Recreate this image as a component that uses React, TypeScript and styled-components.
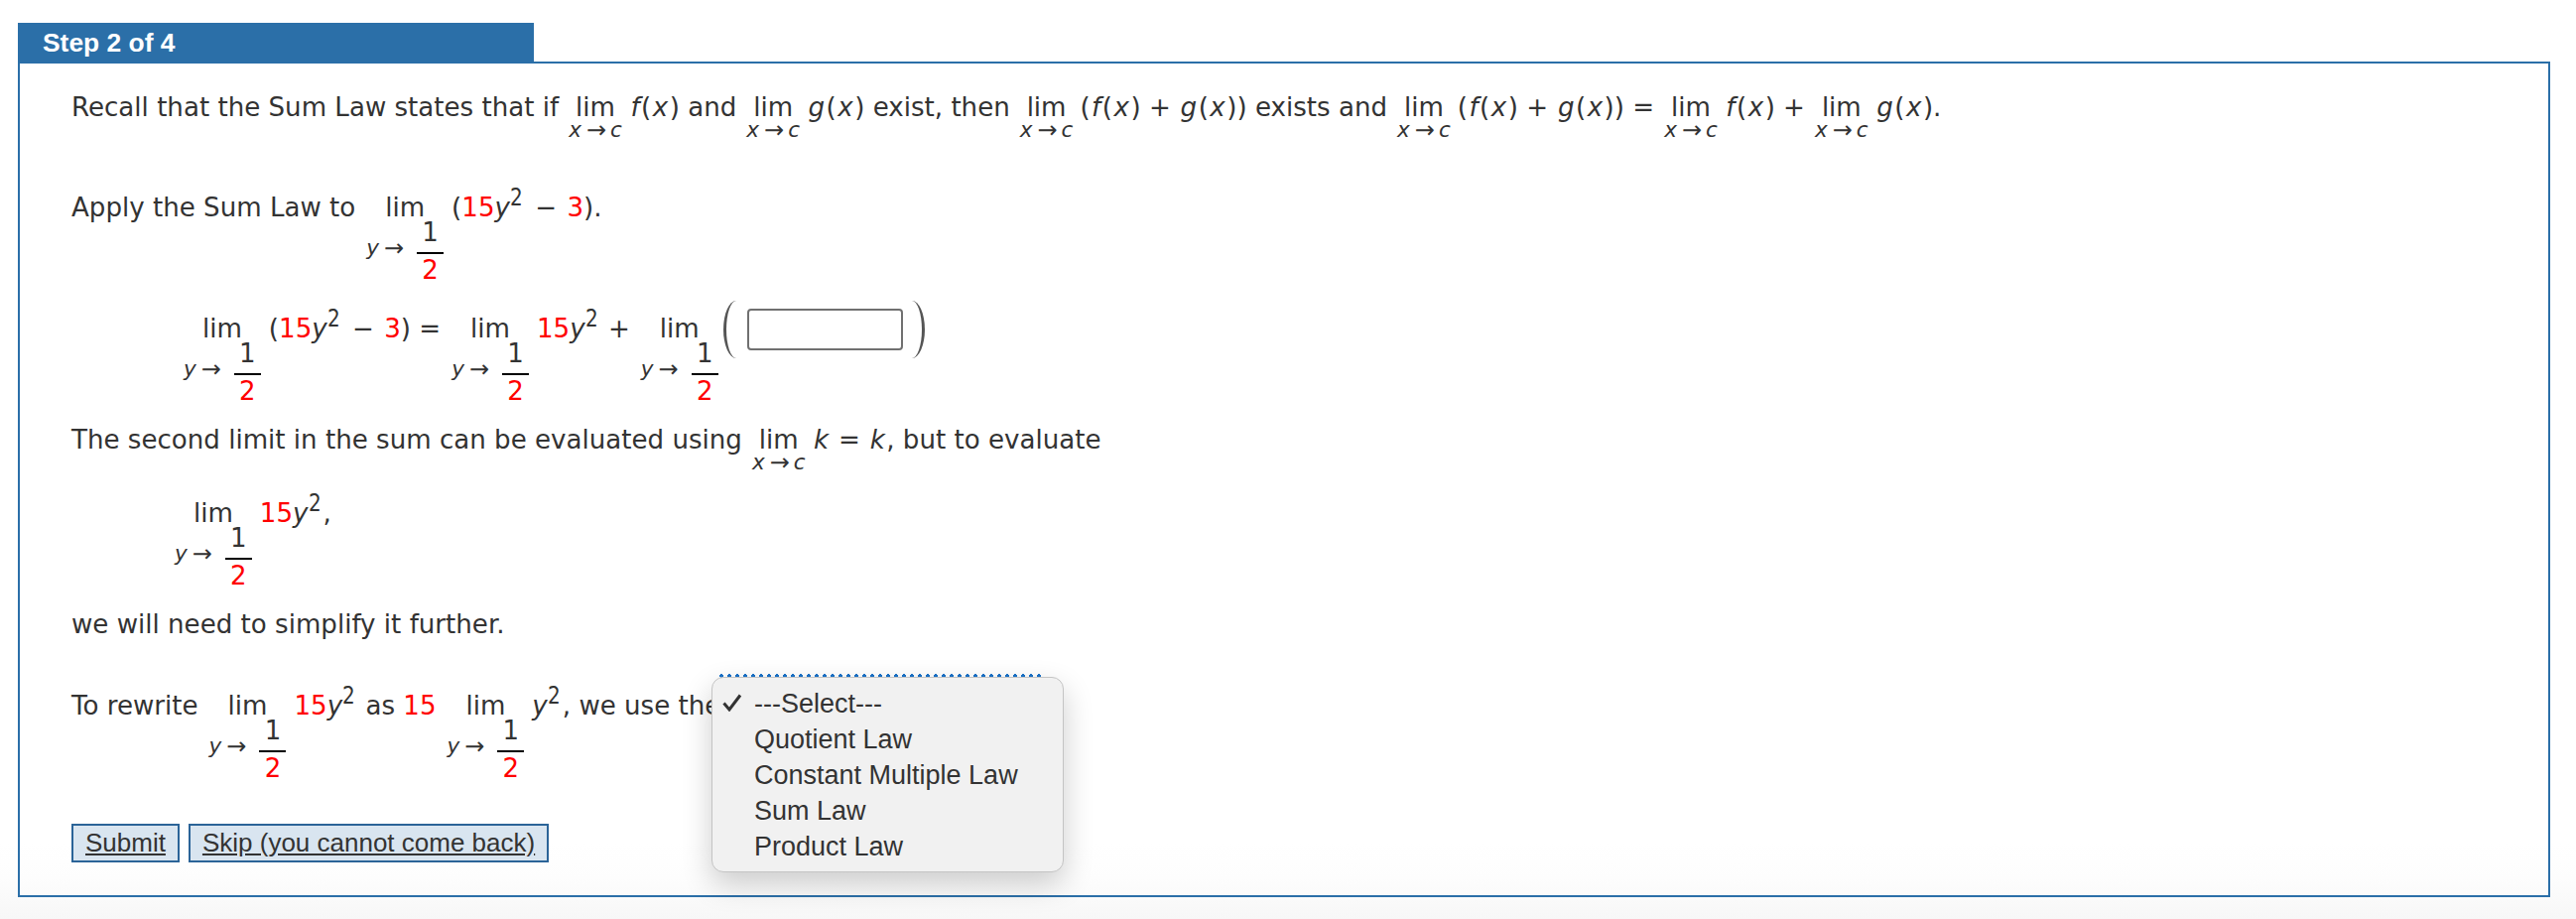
import React from "react";
import styled, { createGlobalStyle } from "styled-components";

const Global = createGlobalStyle`
  html, body { margin: 0; padding: 0; background: #fff; }
  body { font-family: "DejaVu Sans", Verdana, sans-serif; color: #333; }
`;

const Page = styled.div`
  box-sizing: border-box;
  width: 2596px;
  height: 926px;
  overflow: hidden;
  padding: 23px 26px 0 18px;
  background: linear-gradient(to bottom, #fff 0, #fff 850px, #fdfdfd 885px, #f7f7f7 926px);
`;

const Tab = styled.div`
  box-sizing: border-box;
  width: 520px;
  height: 40px;
  padding: 5px 0 0 25px;
  background: #2b6fa8;
  color: #fff;
  font: bold 26.4px/30px "Liberation Sans", Arial, sans-serif;
`;

const Frame = styled.div`
  box-sizing: border-box;
  height: 842px;
  margin-top: -1px;
  padding: 27px 0 0 52px;
  border: 2px solid #2b6fa8;
`;

const Line = styled.div<{ $top?: number; $indent?: number }>`
  position: relative;
  margin-top: ${(p) => p.$top ?? 0}px;
  padding-left: ${(p) => p.$indent ?? 0}px;
  font-size: 26.1px;
  line-height: 34px;
  white-space: nowrap;
`;

const Limit = styled.span<{ $stacked?: boolean }>`
  display: inline-flex;
  flex-direction: column;
  align-items: center;
  margin: ${(p) => (p.$stacked ? "0 8px 0 11px" : "0 7px 0 10px")};
  vertical-align: baseline;
`;

const Lim = styled.span<{ $stacked?: boolean }>`
  line-height: ${(p) => (p.$stacked ? 22 : 26)}px;
`;

const Approach = styled.span`
  display: flex;
  align-items: center;
  font-size: 21.5px;
  line-height: 20px;
  font-style: italic;
`;

const Arrow = styled.span`
  margin: 0 4px 0 5px;
  font-size: 24px;
  font-style: normal;
`;

const Slope = styled.span`
  position: relative;
  top: -3px;
  display: inline-flex;
  align-items: center;
`;

const Fraction = styled.span`
  display: inline-flex;
  flex-direction: column;
  align-items: center;
  width: 27px;
  margin-left: 9px;
  font-size: 26px;
  font-style: normal;
  line-height: 28px;
`;

const Bar = styled.span`
  align-self: stretch;
  height: 2px;
  margin: 6px 0 2px;
  background: #000;
`;

const Red = styled.span`
  color: #f00;
`;

const Var = styled.i<{ $tight?: boolean }>`
  margin: 0 ${(p) => (p.$tight ? 0 : 1.5)}px;
`;

const Minus = styled.span`
  margin: 0 2px;
`;

const Sup = styled.span`
  display: inline-block;
  width: 15px;
  font-size: 25px;
  line-height: 0;
  vertical-align: 11px;
  transform: scaleX(0.8);
  transform-origin: left center;
`;

const Group = styled.span`
  display: inline-flex;
  align-items: center;
  margin-left: -3px;
  vertical-align: -21px;
`;

const Paren = styled.span<{ $close?: boolean }>`
  display: block;
  box-sizing: border-box;
  width: 26px;
  height: 58px;
  border-radius: 50%;
  ${(p) =>
    p.$close
      ? "border-right: 3px solid #555; margin-left: -4px;"
      : "border-left: 3px solid #555; margin-right: -2px;"}
`;

const Blank = styled.span`
  display: block;
  box-sizing: border-box;
  width: 157px;
  height: 42px;
  background: #fff;
  border: 2px solid #707070;
  border-radius: 4px;
`;

const Focus = styled.span`
  position: absolute;
  left: 653px;
  top: -15px;
  width: 324px;
  height: 4px;
  background: radial-gradient(circle at 2px 2px, #1a73c9 1.8px, transparent 2.1px) 0 0 / 8px 4px repeat-x;
`;

const Menu = styled.ul`
  position: absolute;
  left: 645px;
  top: -12px;
  box-sizing: border-box;
  width: 355px;
  height: 197px;
  margin: 0;
  padding: 8px 0 0 42px;
  list-style: none;
  background: #f1f1f1;
  border: 1px solid #c4c4c4;
  border-radius: 12px;
  box-shadow: 0 12px 30px rgba(0, 0, 0, 0.2);
  font: 27px/36px "Liberation Sans", Arial, sans-serif;
  color: #333;
`;

const Item = styled.li`
  position: relative;
  height: 36px;
`;

const Check = styled.svg`
  position: absolute;
  left: -32px;
  top: 8px;
  width: 20px;
  height: 18px;
`;

const Actions = styled.div`
  display: flex;
  gap: 9px;
  margin-top: 42px;
`;

const Button = styled.button`
  box-sizing: border-box;
  height: 39px;
  padding: 0 12px;
  background: #d9e5f0;
  border: 2px solid #2b6498;
  border-radius: 0;
  color: #333;
  font: 26px/33px "Liberation Sans", Arial, sans-serif;
  text-decoration: underline;
`;

const X2C = () => (
  <Limit>
    <Lim>lim</Lim>
    <Approach>
      x<Arrow>→</Arrow>c
    </Approach>
  </Limit>
);

const Y2H = () => (
  <Limit $stacked>
    <Lim $stacked>lim</Lim>
    <Approach>
      <Slope>
        y<Arrow>→</Arrow>
      </Slope>
      <Fraction>
        1
        <Bar />
        <Red>2</Red>
      </Fraction>
    </Approach>
  </Limit>
);

const F = () => (
  <>
    <Var>f</Var>(<Var>x</Var>)
  </>
);
const G = () => (
  <>
    <Var>g</Var>(<Var>x</Var>)
  </>
);
const Term = () => (
  <>
    <Red>15</Red>
    <Var $tight>y</Var>
    <Sup>2</Sup>
  </>
);
const Difference = () => (
  <>
    (<Term /> <Minus>−</Minus> <Red>3</Red>)
  </>
);

export default function App() {
  return (
    <Page>
      <Global />
      <Tab>Step 2 of 4</Tab>
      <Frame>
        <Line>
          Recall that the Sum Law states that if
          <X2C />
          <F /> and
          <X2C />
          <G /> exist, then
          <X2C />
          (<F /> + <G />) exists and
          <X2C />
          (<F /> + <G />) =
          <X2C />
          <F /> +
          <X2C />
          <G />.
        </Line>
        <Line $top={51}>
          Apply the Sum Law to
          <Y2H />
          <Difference />.
        </Line>
        <Line $top={17} $indent={102}>
          <Y2H />
          <Difference /> =
          <Y2H />
          <Term /> +
          <Y2H />
          <Group>
            <Paren />
            <Blank />
            <Paren $close />
          </Group>
        </Line>
        <Line $top={18}>
          The second limit in the sum can be evaluated using
          <X2C />
          <Var>k</Var> = <Var>k</Var>, but to evaluate
        </Line>
        <Line $top={24} $indent={93}>
          <Y2H />
          <Term />,
        </Line>
        <Line $top={18}>we will need to simplify it further.</Line>
        <Line $top={48}>
          To rewrite
          <Y2H />
          <Term /> as <Red>15</Red>
          <Y2H />
          <Var $tight>y</Var>
          <Sup>2</Sup>, we use the
          <Focus />
          <Menu>
            <Item>
              <Check viewBox="0 0 20 18">
                <path d="M1.5 9.5 L7 16 L18 1.5" fill="none" stroke="#333" strokeWidth="3" />
              </Check>
              ---Select---
            </Item>
            <Item>Quotient Law</Item>
            <Item>Constant Multiple Law</Item>
            <Item>Sum Law</Item>
            <Item>Product Law</Item>
          </Menu>
        </Line>
        <Actions>
          <Button>Submit</Button>
          <Button>Skip (you cannot come back)</Button>
        </Actions>
      </Frame>
    </Page>
  );
}
